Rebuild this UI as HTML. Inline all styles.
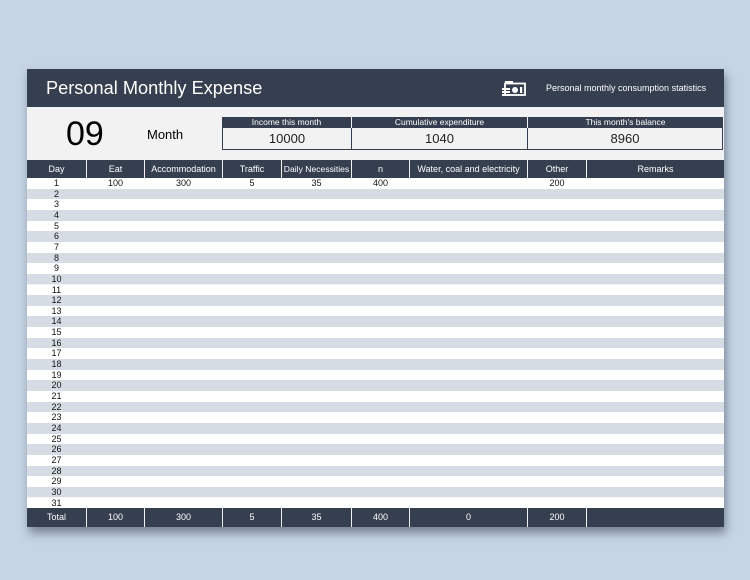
<!DOCTYPE html>
<html><head><meta charset="utf-8"><style>
*{margin:0;padding:0;box-sizing:border-box}
body{width:750px;height:580px;background:#c6d5e5;font-family:"Liberation Sans",Arial,sans-serif;position:relative;overflow:hidden}
.card{position:absolute;left:27px;top:69px;width:697px;height:458px;background:#f2f2f2;box-shadow:2px 6px 9px rgba(40,50,70,.5)}
.a{position:absolute}
.dk{background:#353f4f;color:#fff}
.c{text-align:center;white-space:nowrap}
.row{position:absolute;left:27px;width:697px;height:10.65px;font-size:9px;line-height:10.6px;color:#111}
.row span{position:absolute;text-align:center;top:0}
</style></head><body>
<div class="card"></div>
<div class="a dk" style="left:27px;top:69px;width:697px;height:38px"></div>
<div class="a" style="left:46px;top:78px;font-size:18.2px;color:#fff">Personal Monthly Expense</div>
<svg class="a" style="left:502px;top:80px" width="24" height="16" viewBox="0 0 24 16">
<rect x="3" y="1" width="8" height="2" fill="#fff"/>
<rect x="3" y="3.5" width="20" height="11.5" fill="none" stroke="#fff" stroke-width="1.8"/>
<rect x="0" y="8" width="8" height="2" fill="#fff"/><rect x="0" y="11" width="8" height="2" fill="#fff"/><rect x="0" y="14" width="8" height="2" fill="#fff"/>
<circle cx="13" cy="10" r="3" fill="#fff"/><rect x="18" y="7" width="2.2" height="6" fill="#fff"/>
</svg>
<div class="a" style="left:546px;top:83px;font-size:9px;color:#fff">Personal monthly consumption statistics</div>
<div class="a" style="left:66px;top:115px;font-size:34px;color:#000">09</div>
<div class="a" style="left:147px;top:127px;font-size:13px;color:#000">Month</div>

<div class="a dk c" style="left:222px;top:117px;width:129px;height:11px;font-size:8.5px;line-height:11px">Income this month</div>
<div class="a c" style="left:222px;top:128px;width:130px;height:22px;border:1px solid #353f4f;border-top:0;font-size:13px;line-height:21px;color:#222">10000</div>
<div class="a dk c" style="left:352px;top:117px;width:175px;height:11px;font-size:8.5px;line-height:11px">Cumulative expenditure</div>
<div class="a c" style="left:351px;top:128px;width:177px;height:22px;border:1px solid #353f4f;border-top:0;font-size:13px;line-height:21px;color:#222">1040</div>
<div class="a dk c" style="left:528px;top:117px;width:195px;height:11px;font-size:8.5px;line-height:11px">This month's balance</div>
<div class="a c" style="left:527px;top:128px;width:196px;height:22px;border:1px solid #353f4f;border-top:0;font-size:13px;line-height:21px;color:#222">8960</div>

<div class="a dk c" style="left:27px;top:160px;width:59px;height:18px;font-size:9px;line-height:18px">Day</div>
<div class="a dk c" style="left:87px;top:160px;width:57px;height:18px;font-size:9px;line-height:18px">Eat</div>
<div class="a dk c" style="left:145px;top:160px;width:77px;height:18px;font-size:9px;line-height:18px">Accommodation</div>
<div class="a dk c" style="left:223px;top:160px;width:58px;height:18px;font-size:9px;line-height:18px">Traffic</div>
<div class="a dk c" style="left:282px;top:160px;width:69px;height:18px;font-size:8.6px;line-height:18px">Daily Necessities</div>
<div class="a dk c" style="left:352px;top:160px;width:57px;height:18px;font-size:9px;line-height:18px">n</div>
<div class="a dk c" style="left:410px;top:160px;width:117px;height:18px;font-size:9px;line-height:18px">Water, coal and electricity</div>
<div class="a dk c" style="left:528px;top:160px;width:58px;height:18px;font-size:9px;line-height:18px">Other</div>
<div class="a dk c" style="left:587px;top:160px;width:137px;height:18px;font-size:9px;line-height:18px">Remarks</div>

<div class="row" style="top:178px;background:#fff"><span style="left:0;width:59px">1</span><span style="left:60px;width:57px">100</span><span style="left:118px;width:77px">300</span><span style="left:196px;width:58px">5</span><span style="left:255px;width:69px">35</span><span style="left:325px;width:57px">400</span><span style="left:501px;width:58px">200</span></div>
<div class="row" style="top:188.65px;background:#d6dce4"><span style="left:0;width:59px">2</span></div>
<div class="row" style="top:199.3px;background:#fff"><span style="left:0;width:59px">3</span></div>
<div class="row" style="top:209.95px;background:#d6dce4"><span style="left:0;width:59px">4</span></div>
<div class="row" style="top:220.6px;background:#fff"><span style="left:0;width:59px">5</span></div>
<div class="row" style="top:231.25px;background:#d6dce4"><span style="left:0;width:59px">6</span></div>
<div class="row" style="top:241.9px;background:#fff"><span style="left:0;width:59px">7</span></div>
<div class="row" style="top:252.55px;background:#d6dce4"><span style="left:0;width:59px">8</span></div>
<div class="row" style="top:263.2px;background:#fff"><span style="left:0;width:59px">9</span></div>
<div class="row" style="top:273.85px;background:#d6dce4"><span style="left:0;width:59px">10</span></div>
<div class="row" style="top:284.5px;background:#fff"><span style="left:0;width:59px">11</span></div>
<div class="row" style="top:295.15px;background:#d6dce4"><span style="left:0;width:59px">12</span></div>
<div class="row" style="top:305.8px;background:#fff"><span style="left:0;width:59px">13</span></div>
<div class="row" style="top:316.45px;background:#d6dce4"><span style="left:0;width:59px">14</span></div>
<div class="row" style="top:327.1px;background:#fff"><span style="left:0;width:59px">15</span></div>
<div class="row" style="top:337.75px;background:#d6dce4"><span style="left:0;width:59px">16</span></div>
<div class="row" style="top:348.4px;background:#fff"><span style="left:0;width:59px">17</span></div>
<div class="row" style="top:359.05px;background:#d6dce4"><span style="left:0;width:59px">18</span></div>
<div class="row" style="top:369.7px;background:#fff"><span style="left:0;width:59px">19</span></div>
<div class="row" style="top:380.35px;background:#d6dce4"><span style="left:0;width:59px">20</span></div>
<div class="row" style="top:391px;background:#fff"><span style="left:0;width:59px">21</span></div>
<div class="row" style="top:401.65px;background:#d6dce4"><span style="left:0;width:59px">22</span></div>
<div class="row" style="top:412.3px;background:#fff"><span style="left:0;width:59px">23</span></div>
<div class="row" style="top:422.95px;background:#d6dce4"><span style="left:0;width:59px">24</span></div>
<div class="row" style="top:433.6px;background:#fff"><span style="left:0;width:59px">25</span></div>
<div class="row" style="top:444.25px;background:#d6dce4"><span style="left:0;width:59px">26</span></div>
<div class="row" style="top:454.9px;background:#fff"><span style="left:0;width:59px">27</span></div>
<div class="row" style="top:465.55px;background:#d6dce4"><span style="left:0;width:59px">28</span></div>
<div class="row" style="top:476.2px;background:#fff"><span style="left:0;width:59px">29</span></div>
<div class="row" style="top:486.85px;background:#d6dce4"><span style="left:0;width:59px">30</span></div>
<div class="row" style="top:497.5px;background:#fff;height:10.5px"><span style="left:0;width:59px">31</span></div>

<div class="a dk c" style="left:27px;top:508px;width:59px;height:19px;font-size:9px;line-height:19px">Total</div>
<div class="a dk c" style="left:87px;top:508px;width:57px;height:19px;font-size:9px;line-height:19px">100</div>
<div class="a dk c" style="left:145px;top:508px;width:77px;height:19px;font-size:9px;line-height:19px">300</div>
<div class="a dk c" style="left:223px;top:508px;width:58px;height:19px;font-size:9px;line-height:19px">5</div>
<div class="a dk c" style="left:282px;top:508px;width:69px;height:19px;font-size:9px;line-height:19px">35</div>
<div class="a dk c" style="left:352px;top:508px;width:57px;height:19px;font-size:9px;line-height:19px">400</div>
<div class="a dk c" style="left:410px;top:508px;width:117px;height:19px;font-size:9px;line-height:19px">0</div>
<div class="a dk c" style="left:528px;top:508px;width:58px;height:19px;font-size:9px;line-height:19px">200</div>
<div class="a dk c" style="left:587px;top:508px;width:137px;height:19px;font-size:9px;line-height:19px"></div>
</body></html>
